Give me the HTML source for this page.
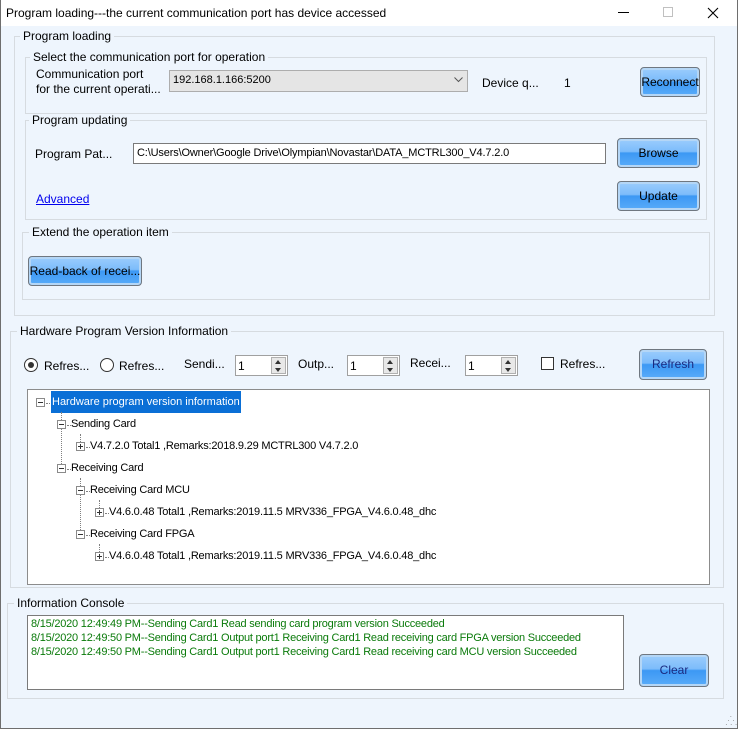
<!DOCTYPE html>
<html><head><meta charset="utf-8"><style>
*{box-sizing:border-box;margin:0;padding:0}
body{width:738px;height:729px;overflow:hidden;background:#eef5fd;font-family:"Liberation Sans",sans-serif;font-size:12px;color:#000;position:relative}
.a{position:absolute;white-space:nowrap}
.win{position:absolute;left:0;top:0;width:738px;height:729px;border:1px solid #6e6e6e;border-top:none}
.title{position:absolute;left:0;top:0;width:738px;height:26px;background:#fff}
.g{position:absolute;border:1px solid #d6dbe0}
.gl{position:absolute;background:#eef5fd;padding:0 3px;line-height:13px;top:-7px;font-size:12px}
.btn{position:absolute;border:1px solid #6f7780;border-radius:4px;background:linear-gradient(#9ccdfc 0%,#7cbcfb 45%,#3c98f4 50%,#5aacf9 100%);box-shadow:inset 0 0 0 2px #b4d6f6;text-align:center;font-size:12px;color:#000}
.inp{position:absolute;background:#fff;border:1px solid #7a7a7a}
.spin{position:absolute;background:#fff;border:1px solid #a0a0a0;height:21px;width:53px}
.spin span{position:absolute;left:2px;top:3px}
.sb{position:absolute;right:1px;top:1px;width:15px;height:17px;background:#e8e8e8;border:1px solid #b0b0b0}
.sb:before{content:"";position:absolute;left:3px;top:2px;border:3px solid transparent;border-bottom:4px solid #333;border-top:none}
.sb:after{content:"";position:absolute;left:3px;top:10px;border:3px solid transparent;border-top:4px solid #333;border-bottom:none}
.bx{position:absolute;width:9px;height:9px;border:1px solid #8a8a8a;background:#fff}
.bx:before{content:"";position:absolute;left:1px;top:3px;width:5px;height:1px;background:#333}
.pl:after{content:"";position:absolute;left:3px;top:1px;width:1px;height:5px;background:#333}
.vl{position:absolute;border-left:1px dotted #808080;width:0}
.hl{position:absolute;border-top:1px dotted #808080;height:0;width:4px}
.t{position:absolute;font-size:11px;white-space:nowrap;letter-spacing:-0.2px}
.c{position:absolute;font-size:11px;color:#0a7a0a;white-space:nowrap;letter-spacing:-0.22px}
</style></head><body>
<div class="title"></div>
<div class="a" style="left:6px;top:6px">Program loading---the current communication port has device accessed</div>
<div class="a" style="left:618px;top:12px;width:11px;height:1px;background:#000"></div>
<div class="a" style="left:663px;top:7px;width:10px;height:10px;border:1px solid #c0c0c0"></div>
<svg class="a" style="left:707px;top:7px" width="12" height="12"><path d="M1 1L11 11M11 1L1 11" stroke="#000" stroke-width="1.1"/></svg>
<div class="win"></div>

<div class="g" style="left:14px;top:36px;width:701px;height:280px"><div class="gl" style="left:5px">Program loading</div></div>
<div class="g" style="left:25px;top:57px;width:682px;height:57px"><div class="gl" style="left:4px">Select the communication port for operation</div></div>
<div class="a" style="left:36px;top:67px">Communication port</div>
<div class="a" style="left:36px;top:82px">for the current operati...</div>
<div class="a" style="left:169px;top:70px;width:299px;height:22px;background:#e5e5e5;border:1px solid #adadad"></div>
<div class="a" style="left:173px;top:74px;font-size:11px">192.168.1.166:5200</div>
<svg class="a" style="left:454px;top:77px" width="9" height="6"><path d="M0.5 0.5L4.5 4.5L8.5 0.5" stroke="#555" fill="none"/></svg>
<div class="a" style="left:482px;top:76px">Device q...</div>
<div class="a" style="left:564px;top:76px">1</div>
<div class="btn" style="left:640px;top:67px;width:60px;height:30px;line-height:28px">Reconnect</div>

<div class="g" style="left:25px;top:120px;width:682px;height:100px"><div class="gl" style="left:3px">Program updating</div></div>
<div class="a" style="left:35px;top:147px">Program Pat...</div>
<div class="inp" style="left:133px;top:143px;width:473px;height:21px"></div>
<div class="a" style="left:137px;top:147px;font-size:11px;letter-spacing:-0.15px">C:\Users\Owner\Google Drive\Olympian\Novastar\DATA_MCTRL300_V4.7.2.0</div>
<div class="btn" style="left:617px;top:138px;width:83px;height:30px;line-height:28px">Browse</div>
<div class="a" style="left:36px;top:192px;color:#0000ee;text-decoration:underline">Advanced</div>
<div class="btn" style="left:617px;top:181px;width:83px;height:30px;line-height:28px">Update</div>

<div class="g" style="left:22px;top:232px;width:688px;height:68px"><div class="gl" style="left:6px">Extend the operation item</div></div>
<div class="btn" style="left:28px;top:256px;width:114px;height:30px;line-height:28px">Read-back of recei...</div>

<div class="g" style="left:10px;top:331px;width:714px;height:257px"><div class="gl" style="left:6px">Hardware Program Version Information</div></div>
<div class="a" style="left:24px;top:358px;width:14px;height:14px;border-radius:50%;border:1px solid #333;background:#fff"></div>
<div class="a" style="left:28px;top:362px;width:6px;height:6px;border-radius:50%;background:#333"></div>
<div class="a" style="left:44px;top:359px">Refres...</div>
<div class="a" style="left:100px;top:358px;width:14px;height:14px;border-radius:50%;border:1px solid #333;background:#fff"></div>
<div class="a" style="left:119px;top:359px">Refres...</div>
<div class="a" style="left:184px;top:357px">Sendi...</div>
<div class="spin" style="left:235px;top:355px"><span>1</span><div class="sb"></div></div>
<div class="a" style="left:298px;top:357px">Outp...</div>
<div class="spin" style="left:347px;top:355px"><span>1</span><div class="sb"></div></div>
<div class="a" style="left:410px;top:356px">Recei...</div>
<div class="spin" style="left:465px;top:355px"><span>1</span><div class="sb"></div></div>
<div class="a" style="left:541px;top:357px;width:13px;height:13px;border:1px solid #333;background:#fff"></div>
<div class="a" style="left:560px;top:357px">Refres...</div>
<div class="btn" style="left:639px;top:349px;width:68px;height:31px;line-height:29px;color:#1a2a80">Refresh</div>

<div class="a" style="left:27px;top:389px;width:683px;height:196px;background:#fff;border:1px solid #8c8c8c"></div>
<div class="a" style="left:51px;top:391px;width:190px;height:22px;background:#0a6fd6"></div>
<div class="t" style="left:52px;top:396px;color:#fff;letter-spacing:0">Hardware program version information</div>
<div class="bx" style="left:36px;top:398px"></div><div class="hl" style="left:46px;top:403px"></div>
<div class="vl" style="left:61px;top:412px;height:52px"></div>
<div class="bx" style="left:57px;top:420px"></div><div class="hl" style="left:67px;top:425px"></div>
<div class="t" style="left:71px;top:418px">Sending Card</div>
<div class="vl" style="left:80px;top:434px;height:10px"></div>
<div class="bx pl" style="left:76px;top:442px"></div><div class="hl" style="left:86px;top:447px"></div>
<div class="t" style="left:90px;top:440px">V4.7.2.0 Total1 ,Remarks:2018.9.29 MCTRL300 V4.7.2.0</div>
<div class="bx" style="left:57px;top:464px"></div><div class="hl" style="left:67px;top:469px"></div>
<div class="t" style="left:71px;top:462px">Receiving Card</div>
<div class="vl" style="left:80px;top:478px;height:52px"></div>
<div class="bx" style="left:76px;top:486px"></div><div class="hl" style="left:86px;top:491px"></div>
<div class="t" style="left:90px;top:484px">Receiving Card MCU</div>
<div class="vl" style="left:99px;top:500px;height:10px"></div>
<div class="bx pl" style="left:95px;top:508px"></div><div class="hl" style="left:105px;top:513px"></div>
<div class="t" style="left:109px;top:506px">V4.6.0.48 Total1 ,Remarks:2019.11.5 MRV336_FPGA_V4.6.0.48_dhc</div>
<div class="bx" style="left:76px;top:530px"></div><div class="hl" style="left:86px;top:535px"></div>
<div class="t" style="left:90px;top:528px">Receiving Card FPGA</div>
<div class="vl" style="left:99px;top:544px;height:10px"></div>
<div class="bx pl" style="left:95px;top:552px"></div><div class="hl" style="left:105px;top:557px"></div>
<div class="t" style="left:109px;top:550px">V4.6.0.48 Total1 ,Remarks:2019.11.5 MRV336_FPGA_V4.6.0.48_dhc</div>

<div class="g" style="left:7px;top:603px;width:717px;height:96px"><div class="gl" style="left:6px">Information Console</div></div>
<div class="a" style="left:27px;top:615px;width:597px;height:75px;background:#fff;border:1px solid #7a7a7a"></div>
<div class="c" style="left:31px;top:618px">8/15/2020 12:49:49 PM--Sending Card1 Read sending card program version Succeeded</div>
<div class="c" style="left:31px;top:632px">8/15/2020 12:49:50 PM--Sending Card1 Output port1 Receiving Card1 Read receiving card FPGA version Succeeded</div>
<div class="c" style="left:31px;top:646px">8/15/2020 12:49:50 PM--Sending Card1 Output port1 Receiving Card1 Read receiving card MCU version Succeeded</div>
<div class="btn" style="left:639px;top:654px;width:70px;height:33px;line-height:31px;color:#1a2a80">Clear</div>
<div class="a" style="left:725px;top:715px;font-size:8px;color:#888;line-height:4px">&nbsp;&nbsp;·<br>&nbsp;·&nbsp;·<br>·&nbsp;·&nbsp;·</div>
</body></html>
